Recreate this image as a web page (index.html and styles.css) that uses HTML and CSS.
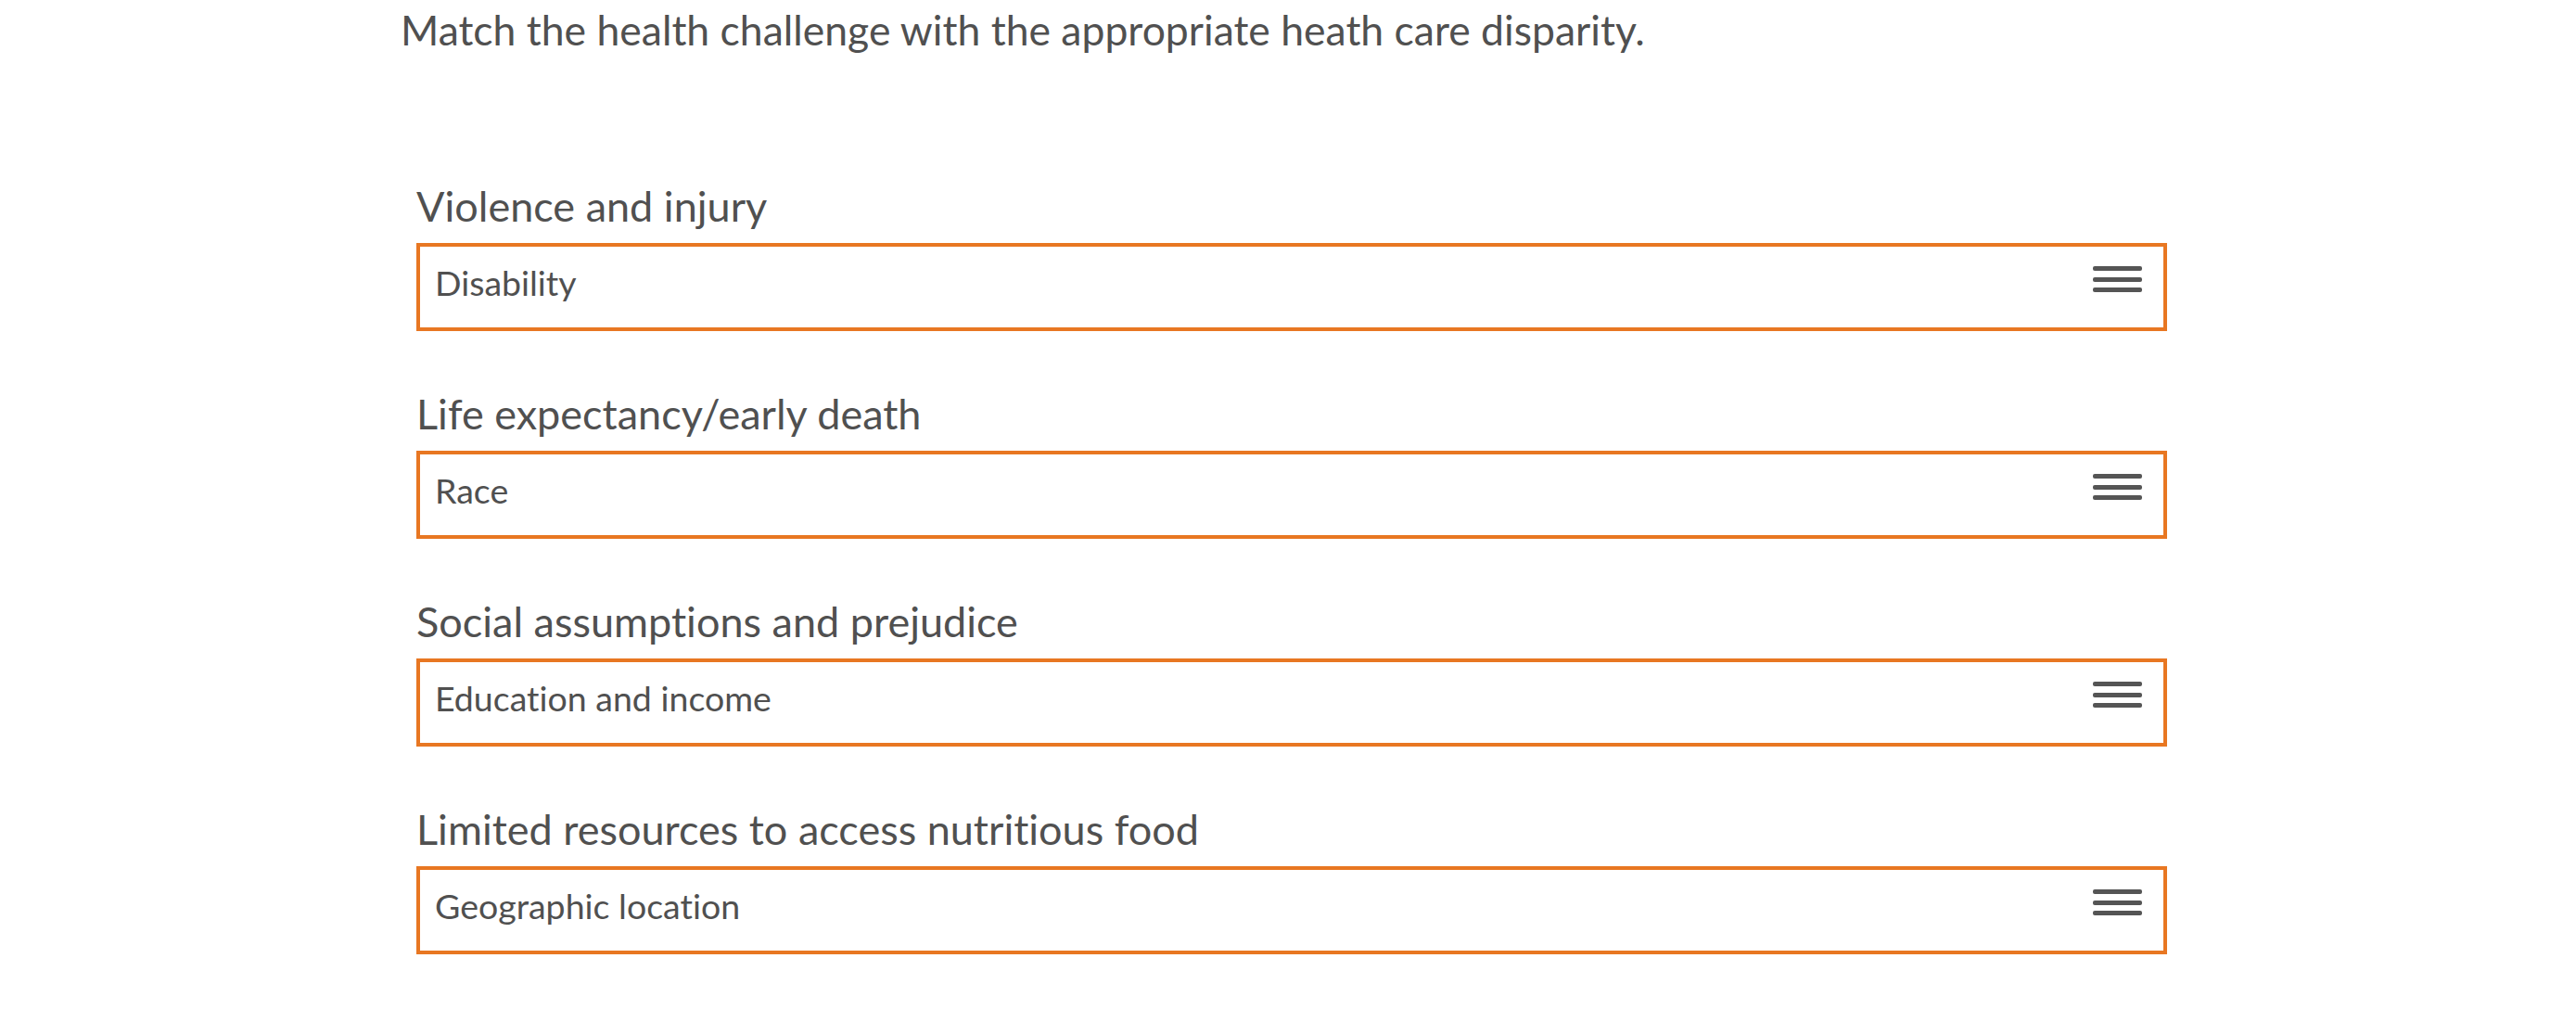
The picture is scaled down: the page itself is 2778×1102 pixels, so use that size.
FILE: index.html
```html
<!DOCTYPE html>
<html lang="en">
<head>
<meta charset="utf-8">
<title>Matching</title>
<link rel="stylesheet" href="styles.css">
</head>
<body>
<main class="question">
  <p class="prompt">Match the health challenge with the appropriate heath care disparity.</p>
  <ul class="matches">
    <li class="match">
      <div class="match-label">Violence and injury</div>
      <div class="match-box"><span class="match-value">Disability</span><span class="handle"><i></i><i></i><i></i></span></div>
    </li>
    <li class="match">
      <div class="match-label">Life expectancy/early death</div>
      <div class="match-box"><span class="match-value">Race</span><span class="handle"><i></i><i></i><i></i></span></div>
    </li>
    <li class="match">
      <div class="match-label">Social assumptions and prejudice</div>
      <div class="match-box"><span class="match-value">Education and income</span><span class="handle"><i></i><i></i><i></i></span></div>
    </li>
    <li class="match">
      <div class="match-label">Limited resources to access nutritious food</div>
      <div class="match-box"><span class="match-value">Geographic location</span><span class="handle"><i></i><i></i><i></i></span></div>
    </li>
  </ul>
</main>
</body>
</html>
```
FILE: styles.css
```css
html, body {
  margin: 0;
  padding: 0;
  background: #ffffff;
}
body {
  font-family: Lato, "Open Sans", sans-serif;
  font-variant-ligatures: none;
  color: #505050;
}
.question {
  margin-left: 432px;
  width: 1905px;
}
.prompt {
  margin: 0;
  padding-top: 4px;
  font-size: 44.5px;
  line-height: 56px;
}
.matches {
  list-style: none;
  margin: 0;
  padding: 134px 0 0 17px;
}
.match {
  margin: 0 0 61px 0;
}
.match-label {
  font-size: 45px;
  line-height: 56px;
  margin-bottom: 12px;
}
.match-box {
  box-sizing: border-box;
  height: 95px;
  border: 4px solid #e87722;
  display: flex;
  align-items: center;
  justify-content: space-between;
  padding: 0 23px 10px 16px;
}
.match-value {
  font-size: 37.5px;
  line-height: 44px;
}
.handle {
  display: flex;
  flex-direction: column;
  gap: 6.5px;
  width: 53px;
  margin-bottom: 7px;
}
.handle i {
  display: block;
  height: 5px;
  border-radius: 2px;
  background: #555555;
}
```
